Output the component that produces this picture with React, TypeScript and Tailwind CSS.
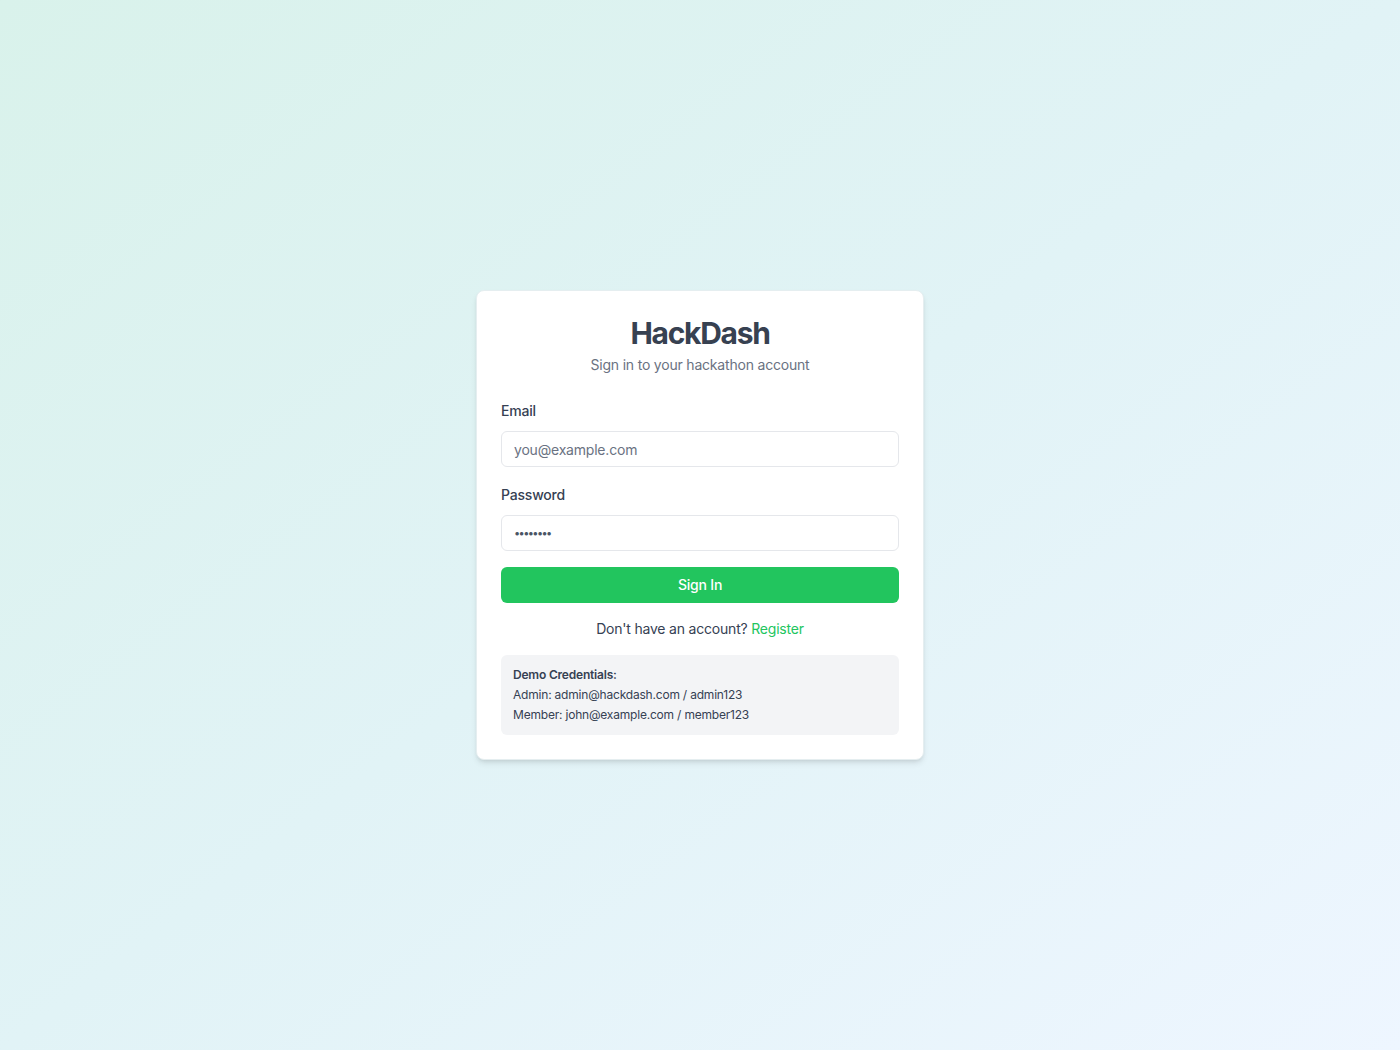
import React from "react";

export default function App() {
  return (
    <div
      className="min-h-screen w-full flex items-center justify-center bg-gradient-to-br from-[#d9f2eb] via-[#e1f3f6] to-[#eef6ff] tracking-[-0.2px]"
      style={{ fontFamily: '"Inter", "Noto Sans", sans-serif' }}
    >
      <div className="w-[448px] bg-white rounded-lg shadow-md border border-[#e5eef0] p-6">
        <div className="text-center">
          <h1 className="text-3xl font-bold text-[#374151] tracking-[-1.3px] leading-9">HackDash</h1>
          <p className="mt-1 text-sm text-gray-500 leading-5">Sign in to your hackathon account</p>
        </div>
        <form className="mt-[26px]" onSubmit={(e) => e.preventDefault()}>
          <label className="block text-sm font-medium text-gray-700 leading-5">Email</label>
          <input
            type="email"
            placeholder="you@example.com"
            className="mt-[10px] block w-full h-9 px-3 text-sm rounded-md border border-gray-200 text-gray-700 placeholder:text-gray-500 outline-none tracking-[-0.2px]"
          />
          <label className="mt-[18px] block text-sm font-medium text-gray-700 leading-5">Password</label>
          <input
            type="password"
            defaultValue="password"
            className="mt-[10px] block w-full h-9 px-3 text-[11px] rounded-md border border-gray-200 text-gray-600 outline-none tracking-[-1.6px]"
          />
          <button
            type="submit"
            className="mt-4 w-full h-9 rounded-md bg-[#22c55e] text-white text-sm font-medium"
          >
            Sign In
          </button>
        </form>
        <p className="mt-4 text-center text-sm text-gray-700 leading-5">
          Don't have an account? <a className="text-[#22c55e]">Register</a>
        </p>
        <div className="mt-4 bg-gray-100 rounded-md p-3 text-xs text-gray-700 leading-4">
          <p className="font-semibold">Demo Credentials:</p>
          <p className="mt-1">Admin: admin@hackdash.com / admin123</p>
          <p className="mt-1">Member: john@example.com / member123</p>
        </div>
      </div>
    </div>
  );
}
